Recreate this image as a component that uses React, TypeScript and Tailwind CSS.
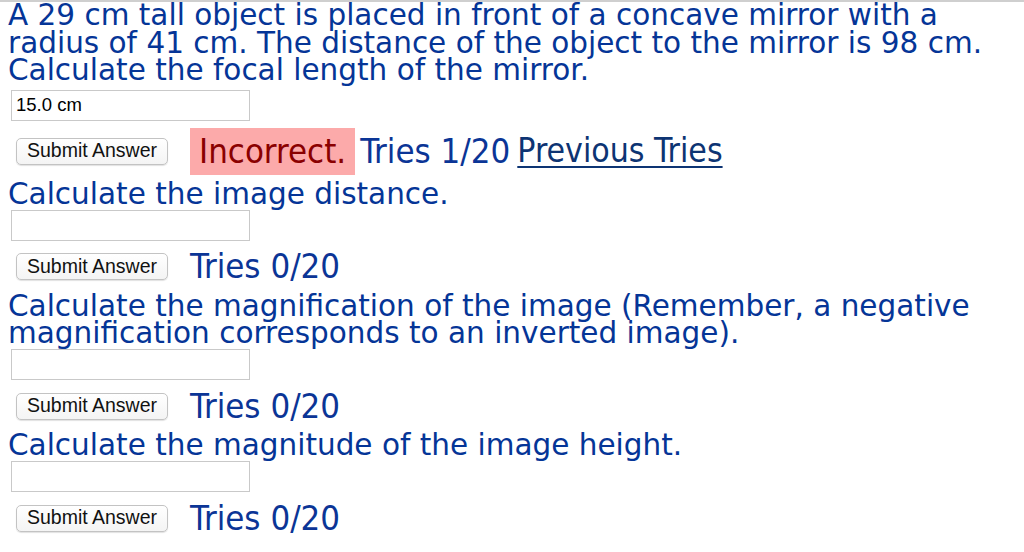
import React from "react";

const qFont = { fontFamily: '"DejaVu Sans", Verdana, sans-serif' };
const sFont = { fontFamily: '"DejaVu Sans Condensed", "DejaVu Sans", sans-serif' };
const uiFont = { fontFamily: '"Liberation Sans", Arial, Helvetica, sans-serif' };

function Input({ value = "", first = false }: { value?: string; first?: boolean }) {
  return (
    <input
      readOnly
      value={value}
      style={uiFont}
      className={`${first ? "mt-[5px]" : "mt-[1.5px]"} ml-[3px] block w-[239px] h-[31px] border border-[#c9c9c9] bg-white px-[4px] text-[18.5px] text-black outline-none`}
    />
  );
}

function Button() {
  return (
    <button
      style={uiFont}
      className="ml-[8px] w-[152px] h-[27px] rounded-[5px] border border-[#c3c3c3] bg-gradient-to-b from-white to-[#f4f4f4] text-[19.5px] text-[#111] leading-none shadow-[0_1px_1px_rgba(0,0,0,0.12)]"
    >
      Submit Answer
    </button>
  );
}

function Question({ children }: { children: React.ReactNode }) {
  return (
    <p style={qFont} className="text-[29.5px] leading-[27.5px] text-[#053597] whitespace-nowrap">
      {children}
    </p>
  );
}

function Row({ children, tall = false }: { children: React.ReactNode; tall?: boolean }) {
  return (
    <div className={`flex items-center ${tall ? "mt-[7px] mb-[6px] h-[47px]" : "my-[6px] h-[40px]"}`}>
      <Button />
      <div style={sFont} className="ml-[22px] flex items-center text-[34.5px] leading-none text-[#0b3596] whitespace-nowrap">
        {children}
      </div>
    </div>
  );
}

export default function App() {
  return (
    <div className="w-[1024px] h-[552px] overflow-hidden bg-white border-t-2 border-[#cfcfcf] pl-[8px]">
      <Question>
        A 29 cm tall object is placed in front of a concave mirror with a<br />
        radius of 41 cm. The distance of the object to the mirror is 98 cm.<br />
        Calculate the focal length of the mirror.
      </Question>
      <Input value="15.0 cm" first />
      <Row tall>
        <span className="flex h-[47px] items-center bg-[#fcaaaa] px-[9px] text-[#8a0000]">Incorrect.</span>
        <span className="ml-[5px]">Tries 1/20</span>
        <span className="ml-[7px] text-[33.5px] text-[#0d3473] underline decoration-[2px] underline-offset-[4px]">Previous Tries</span>
      </Row>
      <Question>Calculate the image distance.</Question>
      <Input />
      <Row>
        <span>Tries 0/20</span>
      </Row>
      <Question>
        Calculate the magnification of the image (Remember, a negative<br />
        magnification corresponds to an inverted image).
      </Question>
      <Input />
      <Row>
        <span>Tries 0/20</span>
      </Row>
      <Question>Calculate the magnitude of the image height.</Question>
      <Input />
      <Row>
        <span>Tries 0/20</span>
      </Row>
    </div>
  );
}
